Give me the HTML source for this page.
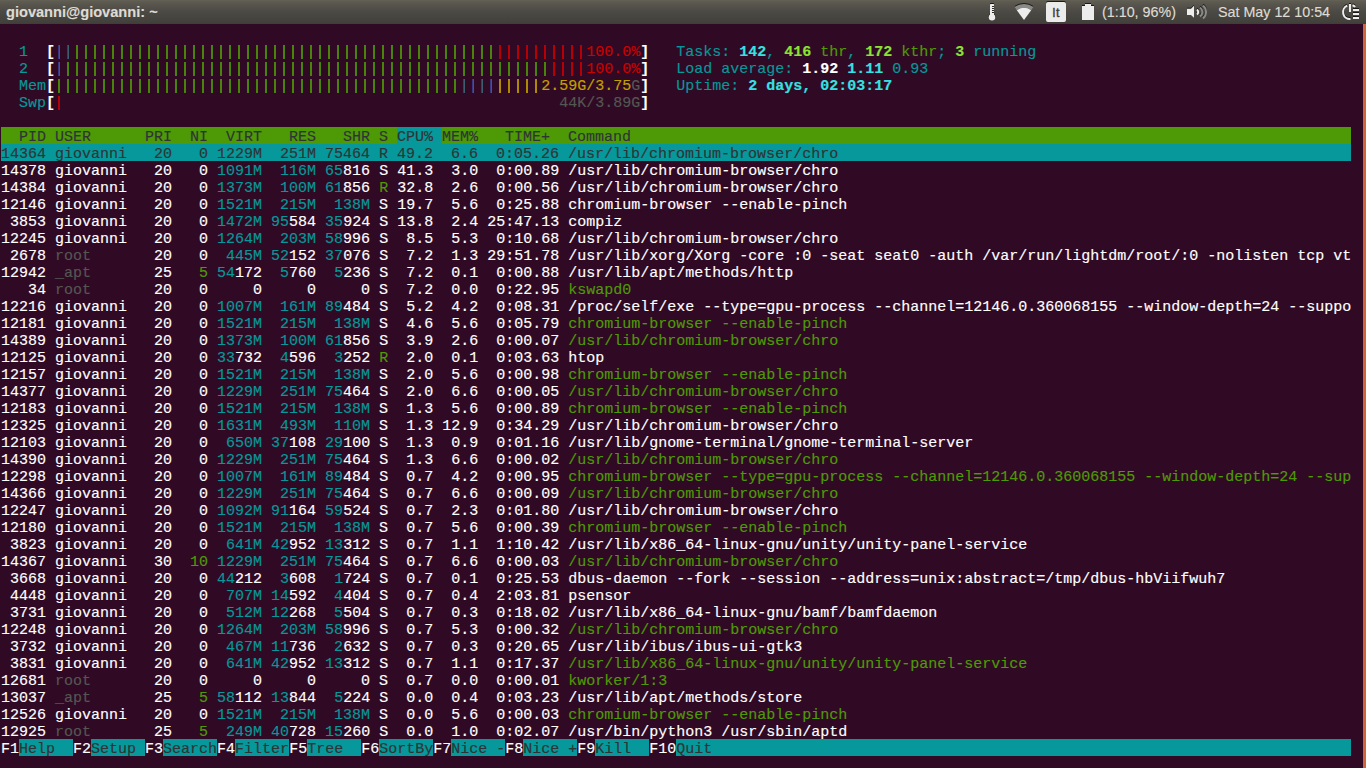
<!DOCTYPE html><html><head><meta charset="utf-8"><style>
*{margin:0;padding:0;box-sizing:border-box}
html,body{width:1366px;height:768px;overflow:hidden;background:#300a24}
body{position:relative;font-family:"Liberation Mono",monospace}
.p{position:absolute;left:0;top:0;width:1366px;height:24px;background:linear-gradient(#646156 0px,#5e5b53 1.5px,#57544d 5px,#4b4944 12px,#42413c 22px,#3e3d38 24px)}
.t{position:absolute;font-family:"Liberation Sans",sans-serif;color:#dfdbd2;white-space:pre;-webkit-text-stroke:0.15px #dfdbd2}
.r{position:absolute;left:1px;height:17px;line-height:17px;font-size:15px;white-space:pre;color:#fff;-webkit-text-stroke:0.15px currentColor}
.bg{position:absolute;height:17px}
.bar{position:absolute;width:2px;height:14px;opacity:0.85}
.w{color:#fff}.c{color:#06989a}.C{color:#34e2e2;font-weight:bold}.g{color:#4e9a06}.G{color:#8ae234;font-weight:bold}
.x{color:#555753}.rd{color:#cc0000}.y{color:#c4a000}.k{color:#2e3436}.b{color:#fff;font-weight:bold}
</style></head><body><div class="p"></div>
<div class="t" style="left:6px;top:4px;font-size:14.6px;font-weight:bold">giovanni@giovanni: ~</div>
<div class="t" style="left:1102px;top:4px;font-size:14.3px">(1:10, 96%)</div>
<div class="t" style="left:1218px;top:4px;font-size:14.3px">Sat May 12 10:54</div>
<svg style="position:absolute;left:0;top:0;filter:drop-shadow(0 -0.5px 0.6px rgba(0,0,0,0.7))" width="1366" height="24" viewBox="0 0 1366 24">
<g fill="#ededed">
 <!-- thermometer -->
 <rect x="990" y="4" width="4" height="12" rx="0.5"/>
 <circle cx="992" cy="17.3" r="3.2"/>
 <g fill="#2a2925"><rect x="992" y="6" width="2" height="1"/><rect x="992" y="8" width="2" height="1"/><rect x="992" y="10" width="2" height="1"/><rect x="992" y="12" width="2" height="1"/></g>
 <!-- wifi -->
 <path fill="#8a8a86" d="M1014.6,7.06 A16,16 0 0 1 1033.4,7.06 L1031.17,10.13 A12.2,12.2 0 0 0 1016.83,10.13 Z"/>
 <path d="M1024,20 L1016.83,10.13 A12.2,12.2 0 0 1 1031.17,10.13 Z"/>
 <!-- keyboard layout box -->
 <rect x="1046" y="2" width="20" height="20" rx="2" fill="#ebebeb"/>
 <!-- battery -->
 <rect x="1085" y="4" width="6" height="2"/>
 <rect x="1082" y="6" width="12" height="14"/>
 <!-- volume -->
 <path d="M1187,8.75 L1191,8.75 L1194,5.8 L1194,17.8 L1191,15 L1187,15 Z"/>
 <path fill="none" stroke="#ededed" stroke-width="2" d="M1197,9.5 A3.2,3.2 0 0 1 1197,14.5"/>
 <path fill="none" stroke="#8a8a86" stroke-width="2" d="M1200,7.5 A5.5,5.5 0 0 1 1200,16.5"/>
 <path fill="none" stroke="#8a8a86" stroke-width="2" d="M1203,5.5 A8.5,8.5 0 0 1 1203,18.5"/>
 <!-- power -->
 <rect x="1349" y="4" width="2" height="8"/>
 <path fill="none" stroke="#ededed" stroke-width="2" d="M1347.2,5.59 A7,7 0 0 0 1350.49,18.98"/>
 <path fill="none" stroke="#ededed" stroke-width="2" d="M1352.5,5.2 A7.2,7.2 0 0 1 1355.2,6.9"/>
 <rect x="1353" y="9" width="6" height="2"/>
 <rect x="1353" y="13" width="6" height="2"/>
 <rect x="1353" y="17" width="6" height="2"/>
</g>
</svg>
<div style="position:absolute;left:1046px;top:2px;width:20px;height:20px;font-family:Liberation Sans,sans-serif;font-weight:normal;-webkit-text-stroke:0.4px #3c3c3c;font-size:12.5px;line-height:22px;text-align:center;color:#3c3c3c;letter-spacing:0.8px;text-indent:0.8px">lt</div>
<div class="bar" style="top:45px;left:58px;background:linear-gradient(90deg,#3b3f92 50%,#3f6d7c 50%)"></div>
<div class="bar" style="top:45px;left:67px;background:linear-gradient(90deg,#3b3f92 50%,#3f6d7c 50%)"></div>
<div class="bar" style="top:45px;left:76px;background:#4e9a06"></div>
<div class="bar" style="top:45px;left:85px;background:#4e9a06"></div>
<div class="bar" style="top:45px;left:94px;background:#4e9a06"></div>
<div class="bar" style="top:45px;left:103px;background:#4e9a06"></div>
<div class="bar" style="top:45px;left:112px;background:#4e9a06"></div>
<div class="bar" style="top:45px;left:121px;background:#4e9a06"></div>
<div class="bar" style="top:45px;left:130px;background:#4e9a06"></div>
<div class="bar" style="top:45px;left:139px;background:#4e9a06"></div>
<div class="bar" style="top:45px;left:148px;background:#4e9a06"></div>
<div class="bar" style="top:45px;left:157px;background:#4e9a06"></div>
<div class="bar" style="top:45px;left:166px;background:#4e9a06"></div>
<div class="bar" style="top:45px;left:175px;background:#4e9a06"></div>
<div class="bar" style="top:45px;left:184px;background:#4e9a06"></div>
<div class="bar" style="top:45px;left:193px;background:#4e9a06"></div>
<div class="bar" style="top:45px;left:202px;background:#4e9a06"></div>
<div class="bar" style="top:45px;left:211px;background:#4e9a06"></div>
<div class="bar" style="top:45px;left:220px;background:#4e9a06"></div>
<div class="bar" style="top:45px;left:229px;background:#4e9a06"></div>
<div class="bar" style="top:45px;left:238px;background:#4e9a06"></div>
<div class="bar" style="top:45px;left:247px;background:#4e9a06"></div>
<div class="bar" style="top:45px;left:256px;background:#4e9a06"></div>
<div class="bar" style="top:45px;left:265px;background:#4e9a06"></div>
<div class="bar" style="top:45px;left:274px;background:#4e9a06"></div>
<div class="bar" style="top:45px;left:283px;background:#4e9a06"></div>
<div class="bar" style="top:45px;left:292px;background:#4e9a06"></div>
<div class="bar" style="top:45px;left:301px;background:#4e9a06"></div>
<div class="bar" style="top:45px;left:310px;background:#4e9a06"></div>
<div class="bar" style="top:45px;left:319px;background:#4e9a06"></div>
<div class="bar" style="top:45px;left:328px;background:#4e9a06"></div>
<div class="bar" style="top:45px;left:337px;background:#4e9a06"></div>
<div class="bar" style="top:45px;left:346px;background:#4e9a06"></div>
<div class="bar" style="top:45px;left:355px;background:#4e9a06"></div>
<div class="bar" style="top:45px;left:364px;background:#4e9a06"></div>
<div class="bar" style="top:45px;left:373px;background:#4e9a06"></div>
<div class="bar" style="top:45px;left:382px;background:#4e9a06"></div>
<div class="bar" style="top:45px;left:391px;background:#4e9a06"></div>
<div class="bar" style="top:45px;left:400px;background:#4e9a06"></div>
<div class="bar" style="top:45px;left:409px;background:#4e9a06"></div>
<div class="bar" style="top:45px;left:418px;background:#4e9a06"></div>
<div class="bar" style="top:45px;left:427px;background:#4e9a06"></div>
<div class="bar" style="top:45px;left:436px;background:#4e9a06"></div>
<div class="bar" style="top:45px;left:445px;background:#4e9a06"></div>
<div class="bar" style="top:45px;left:454px;background:#4e9a06"></div>
<div class="bar" style="top:45px;left:463px;background:#4e9a06"></div>
<div class="bar" style="top:45px;left:472px;background:#4e9a06"></div>
<div class="bar" style="top:45px;left:481px;background:#4e9a06"></div>
<div class="bar" style="top:45px;left:490px;background:#4e9a06"></div>
<div class="bar" style="top:45px;left:499px;background:#cc0000"></div>
<div class="bar" style="top:45px;left:508px;background:#cc0000"></div>
<div class="bar" style="top:45px;left:517px;background:#cc0000"></div>
<div class="bar" style="top:45px;left:526px;background:#cc0000"></div>
<div class="bar" style="top:45px;left:535px;background:#cc0000"></div>
<div class="bar" style="top:45px;left:544px;background:#cc0000"></div>
<div class="bar" style="top:45px;left:553px;background:#cc0000"></div>
<div class="bar" style="top:45px;left:562px;background:#cc0000"></div>
<div class="bar" style="top:45px;left:571px;background:#cc0000"></div>
<div class="bar" style="top:45px;left:580px;background:#cc0000"></div>
<div class="r" style="top:44px">  <span class="c">1</span>  <span class="b">[</span>                                                           <span class="rd">100.0%</span><span class="b">]</span>   <span class="c">Tasks: </span><span class="C">142</span><span class="c">, </span><span class="G">416</span><span class="g"> thr</span><span class="c">, </span><span class="G">172</span><span class="g"> kthr</span><span class="c">; </span><span class="G">3</span><span class="c"> running</span></div>
<div class="bar" style="top:62px;left:58px;background:linear-gradient(90deg,#3b3f92 50%,#3f6d7c 50%)"></div>
<div class="bar" style="top:62px;left:67px;background:#4e9a06"></div>
<div class="bar" style="top:62px;left:76px;background:#4e9a06"></div>
<div class="bar" style="top:62px;left:85px;background:#4e9a06"></div>
<div class="bar" style="top:62px;left:94px;background:#4e9a06"></div>
<div class="bar" style="top:62px;left:103px;background:#4e9a06"></div>
<div class="bar" style="top:62px;left:112px;background:#4e9a06"></div>
<div class="bar" style="top:62px;left:121px;background:#4e9a06"></div>
<div class="bar" style="top:62px;left:130px;background:#4e9a06"></div>
<div class="bar" style="top:62px;left:139px;background:#4e9a06"></div>
<div class="bar" style="top:62px;left:148px;background:#4e9a06"></div>
<div class="bar" style="top:62px;left:157px;background:#4e9a06"></div>
<div class="bar" style="top:62px;left:166px;background:#4e9a06"></div>
<div class="bar" style="top:62px;left:175px;background:#4e9a06"></div>
<div class="bar" style="top:62px;left:184px;background:#4e9a06"></div>
<div class="bar" style="top:62px;left:193px;background:#4e9a06"></div>
<div class="bar" style="top:62px;left:202px;background:#4e9a06"></div>
<div class="bar" style="top:62px;left:211px;background:#4e9a06"></div>
<div class="bar" style="top:62px;left:220px;background:#4e9a06"></div>
<div class="bar" style="top:62px;left:229px;background:#4e9a06"></div>
<div class="bar" style="top:62px;left:238px;background:#4e9a06"></div>
<div class="bar" style="top:62px;left:247px;background:#4e9a06"></div>
<div class="bar" style="top:62px;left:256px;background:#4e9a06"></div>
<div class="bar" style="top:62px;left:265px;background:#4e9a06"></div>
<div class="bar" style="top:62px;left:274px;background:#4e9a06"></div>
<div class="bar" style="top:62px;left:283px;background:#4e9a06"></div>
<div class="bar" style="top:62px;left:292px;background:#4e9a06"></div>
<div class="bar" style="top:62px;left:301px;background:#4e9a06"></div>
<div class="bar" style="top:62px;left:310px;background:#4e9a06"></div>
<div class="bar" style="top:62px;left:319px;background:#4e9a06"></div>
<div class="bar" style="top:62px;left:328px;background:#4e9a06"></div>
<div class="bar" style="top:62px;left:337px;background:#4e9a06"></div>
<div class="bar" style="top:62px;left:346px;background:#4e9a06"></div>
<div class="bar" style="top:62px;left:355px;background:#4e9a06"></div>
<div class="bar" style="top:62px;left:364px;background:#4e9a06"></div>
<div class="bar" style="top:62px;left:373px;background:#4e9a06"></div>
<div class="bar" style="top:62px;left:382px;background:#4e9a06"></div>
<div class="bar" style="top:62px;left:391px;background:#4e9a06"></div>
<div class="bar" style="top:62px;left:400px;background:#4e9a06"></div>
<div class="bar" style="top:62px;left:409px;background:#4e9a06"></div>
<div class="bar" style="top:62px;left:418px;background:#4e9a06"></div>
<div class="bar" style="top:62px;left:427px;background:#4e9a06"></div>
<div class="bar" style="top:62px;left:436px;background:#4e9a06"></div>
<div class="bar" style="top:62px;left:445px;background:#4e9a06"></div>
<div class="bar" style="top:62px;left:454px;background:#4e9a06"></div>
<div class="bar" style="top:62px;left:463px;background:#4e9a06"></div>
<div class="bar" style="top:62px;left:472px;background:#4e9a06"></div>
<div class="bar" style="top:62px;left:481px;background:#4e9a06"></div>
<div class="bar" style="top:62px;left:490px;background:#4e9a06"></div>
<div class="bar" style="top:62px;left:499px;background:#4e9a06"></div>
<div class="bar" style="top:62px;left:508px;background:#4e9a06"></div>
<div class="bar" style="top:62px;left:517px;background:#4e9a06"></div>
<div class="bar" style="top:62px;left:526px;background:#4e9a06"></div>
<div class="bar" style="top:62px;left:535px;background:#4e9a06"></div>
<div class="bar" style="top:62px;left:544px;background:#4e9a06"></div>
<div class="bar" style="top:62px;left:553px;background:#cc0000"></div>
<div class="bar" style="top:62px;left:562px;background:#cc0000"></div>
<div class="bar" style="top:62px;left:571px;background:#cc0000"></div>
<div class="bar" style="top:62px;left:580px;background:#cc0000"></div>
<div class="r" style="top:61px">  <span class="c">2</span>  <span class="b">[</span>                                                           <span class="rd">100.0%</span><span class="b">]</span>   <span class="c">Load average: </span><span class="b">1.92 </span><span class="C">1.11 </span><span class="c">0.93</span></div>
<div class="bar" style="top:79px;left:58px;background:#4e9a06"></div>
<div class="bar" style="top:79px;left:67px;background:#4e9a06"></div>
<div class="bar" style="top:79px;left:76px;background:#4e9a06"></div>
<div class="bar" style="top:79px;left:85px;background:#4e9a06"></div>
<div class="bar" style="top:79px;left:94px;background:#4e9a06"></div>
<div class="bar" style="top:79px;left:103px;background:#4e9a06"></div>
<div class="bar" style="top:79px;left:112px;background:#4e9a06"></div>
<div class="bar" style="top:79px;left:121px;background:#4e9a06"></div>
<div class="bar" style="top:79px;left:130px;background:#4e9a06"></div>
<div class="bar" style="top:79px;left:139px;background:#4e9a06"></div>
<div class="bar" style="top:79px;left:148px;background:#4e9a06"></div>
<div class="bar" style="top:79px;left:157px;background:#4e9a06"></div>
<div class="bar" style="top:79px;left:166px;background:#4e9a06"></div>
<div class="bar" style="top:79px;left:175px;background:#4e9a06"></div>
<div class="bar" style="top:79px;left:184px;background:#4e9a06"></div>
<div class="bar" style="top:79px;left:193px;background:#4e9a06"></div>
<div class="bar" style="top:79px;left:202px;background:#4e9a06"></div>
<div class="bar" style="top:79px;left:211px;background:#4e9a06"></div>
<div class="bar" style="top:79px;left:220px;background:#4e9a06"></div>
<div class="bar" style="top:79px;left:229px;background:#4e9a06"></div>
<div class="bar" style="top:79px;left:238px;background:#4e9a06"></div>
<div class="bar" style="top:79px;left:247px;background:#4e9a06"></div>
<div class="bar" style="top:79px;left:256px;background:#4e9a06"></div>
<div class="bar" style="top:79px;left:265px;background:#4e9a06"></div>
<div class="bar" style="top:79px;left:274px;background:#4e9a06"></div>
<div class="bar" style="top:79px;left:283px;background:#4e9a06"></div>
<div class="bar" style="top:79px;left:292px;background:#4e9a06"></div>
<div class="bar" style="top:79px;left:301px;background:#4e9a06"></div>
<div class="bar" style="top:79px;left:310px;background:#4e9a06"></div>
<div class="bar" style="top:79px;left:319px;background:#4e9a06"></div>
<div class="bar" style="top:79px;left:328px;background:#4e9a06"></div>
<div class="bar" style="top:79px;left:337px;background:#4e9a06"></div>
<div class="bar" style="top:79px;left:346px;background:#4e9a06"></div>
<div class="bar" style="top:79px;left:355px;background:#4e9a06"></div>
<div class="bar" style="top:79px;left:364px;background:#4e9a06"></div>
<div class="bar" style="top:79px;left:373px;background:#4e9a06"></div>
<div class="bar" style="top:79px;left:382px;background:#4e9a06"></div>
<div class="bar" style="top:79px;left:391px;background:#4e9a06"></div>
<div class="bar" style="top:79px;left:400px;background:#4e9a06"></div>
<div class="bar" style="top:79px;left:409px;background:#4e9a06"></div>
<div class="bar" style="top:79px;left:418px;background:#4e9a06"></div>
<div class="bar" style="top:79px;left:427px;background:#4e9a06"></div>
<div class="bar" style="top:79px;left:436px;background:#4e9a06"></div>
<div class="bar" style="top:79px;left:445px;background:#4e9a06"></div>
<div class="bar" style="top:79px;left:454px;background:#4e9a06"></div>
<div class="bar" style="top:79px;left:463px;background:linear-gradient(90deg,#3b3f92 50%,#3f6d7c 50%)"></div>
<div class="bar" style="top:79px;left:472px;background:linear-gradient(90deg,#3b3f92 50%,#3f6d7c 50%)"></div>
<div class="bar" style="top:79px;left:481px;background:linear-gradient(90deg,#3b3f92 50%,#3f6d7c 50%)"></div>
<div class="bar" style="top:79px;left:490px;background:linear-gradient(90deg,#3b3f92 50%,#3f6d7c 50%)"></div>
<div class="bar" style="top:79px;left:499px;background:#c4a000"></div>
<div class="bar" style="top:79px;left:508px;background:#c4a000"></div>
<div class="bar" style="top:79px;left:517px;background:#c4a000"></div>
<div class="bar" style="top:79px;left:526px;background:#c4a000"></div>
<div class="bar" style="top:79px;left:535px;background:#c4a000"></div>
<div class="r" style="top:78px">  <span class="c">Mem</span><span class="b">[</span>                                                      <span class="y">2.59G/3.75</span><span class="x">G</span><span class="b">]</span>   <span class="c">Uptime: </span><span class="C">2 days, 02:03:17</span></div>
<div class="bar" style="top:96px;left:58px;background:#cc0000"></div>
<div class="r" style="top:95px">  <span class="c">Swp</span><span class="b">[</span>                                                        <span class="x">44K/3.89G</span><span class="b">]</span></div>
<div class="bg" style="top:127px;left:1px;width:1350px;background:#4e9a06"></div>
<div class="bg" style="top:127px;left:397px;width:45px;background:#06989a"></div>
<div class="r" style="top:129px"><span class="k">  PID USER      PRI  NI  VIRT   RES   SHR S CPU% MEM%   TIME+  Command</span></div>
<div class="bg" style="top:144px;left:1px;width:1350px;background:#06989a"></div>
<div class="r" style="top:146px"><span class="k">14364 giovanni   20   0 1229M  251M 75464 R 49.2  6.6  0:05.26 /usr/lib/chromium-browser/chro</span></div>
<div class="r" style="top:163px"><span class="w">14378 </span><span class="w">giovanni  </span><span class="w"> 20 </span><span class="w">  0 </span><span class="c">1091M </span><span class="c"> 116M </span><span class="c">65</span><span class="w">816 </span><span class="w">S</span><span class="w"> 41.3  3.0  0:00.89 </span><span class="w">/usr/lib/chromium-browser/chro</span></div>
<div class="r" style="top:180px"><span class="w">14384 </span><span class="w">giovanni  </span><span class="w"> 20 </span><span class="w">  0 </span><span class="c">1373M </span><span class="c"> 100M </span><span class="c">61</span><span class="w">856 </span><span class="g">R</span><span class="w"> 32.8  2.6  0:00.56 </span><span class="w">/usr/lib/chromium-browser/chro</span></div>
<div class="r" style="top:197px"><span class="w">12146 </span><span class="w">giovanni  </span><span class="w"> 20 </span><span class="w">  0 </span><span class="c">1521M </span><span class="c"> 215M </span><span class="c"> 138M </span><span class="w">S</span><span class="w"> 19.7  5.6  0:25.88 </span><span class="w">chromium-browser --enable-pinch</span></div>
<div class="r" style="top:214px"><span class="w"> 3853 </span><span class="w">giovanni  </span><span class="w"> 20 </span><span class="w">  0 </span><span class="c">1472M </span><span class="c">95</span><span class="w">584 </span><span class="c">35</span><span class="w">924 </span><span class="w">S</span><span class="w"> 13.8  2.4 25:47.13 </span><span class="w">compiz</span></div>
<div class="r" style="top:231px"><span class="w">12245 </span><span class="w">giovanni  </span><span class="w"> 20 </span><span class="w">  0 </span><span class="c">1264M </span><span class="c"> 203M </span><span class="c">58</span><span class="w">996 </span><span class="w">S</span><span class="w">  8.5  5.3  0:10.68 </span><span class="w">/usr/lib/chromium-browser/chro</span></div>
<div class="r" style="top:248px"><span class="w"> 2678 </span><span class="x">root      </span><span class="w"> 20 </span><span class="w">  0 </span><span class="c"> 445M </span><span class="c">52</span><span class="w">152 </span><span class="c">37</span><span class="w">076 </span><span class="w">S</span><span class="w">  7.2  1.3 29:51.78 </span><span class="w">/usr/lib/xorg/Xorg -core :0 -seat seat0 -auth /var/run/lightdm/root/:0 -nolisten tcp vt</span></div>
<div class="r" style="top:265px"><span class="w">12942 </span><span class="x">_apt      </span><span class="w"> 25 </span><span class="g">  5 </span><span class="c">54</span><span class="w">172 </span><span class="c"> 5</span><span class="w">760 </span><span class="c"> 5</span><span class="w">236 </span><span class="w">S</span><span class="w">  7.2  0.1  0:00.88 </span><span class="w">/usr/lib/apt/methods/http</span></div>
<div class="r" style="top:282px"><span class="w">   34 </span><span class="x">root      </span><span class="w"> 20 </span><span class="w">  0 </span><span class="w">    0 </span><span class="w">    0 </span><span class="w">    0 </span><span class="w">S</span><span class="w">  7.2  0.0  0:22.95 </span><span class="g">kswapd0</span></div>
<div class="r" style="top:299px"><span class="w">12216 </span><span class="w">giovanni  </span><span class="w"> 20 </span><span class="w">  0 </span><span class="c">1007M </span><span class="c"> 161M </span><span class="c">89</span><span class="w">484 </span><span class="w">S</span><span class="w">  5.2  4.2  0:08.31 </span><span class="w">/proc/self/exe --type=gpu-process --channel=12146.0.360068155 --window-depth=24 --suppo</span></div>
<div class="r" style="top:316px"><span class="w">12181 </span><span class="w">giovanni  </span><span class="w"> 20 </span><span class="w">  0 </span><span class="c">1521M </span><span class="c"> 215M </span><span class="c"> 138M </span><span class="w">S</span><span class="w">  4.6  5.6  0:05.79 </span><span class="g">chromium-browser --enable-pinch</span></div>
<div class="r" style="top:333px"><span class="w">14389 </span><span class="w">giovanni  </span><span class="w"> 20 </span><span class="w">  0 </span><span class="c">1373M </span><span class="c"> 100M </span><span class="c">61</span><span class="w">856 </span><span class="w">S</span><span class="w">  3.9  2.6  0:00.07 </span><span class="g">/usr/lib/chromium-browser/chro</span></div>
<div class="r" style="top:350px"><span class="w">12125 </span><span class="w">giovanni  </span><span class="w"> 20 </span><span class="w">  0 </span><span class="c">33</span><span class="w">732 </span><span class="c"> 4</span><span class="w">596 </span><span class="c"> 3</span><span class="w">252 </span><span class="g">R</span><span class="w">  2.0  0.1  0:03.63 </span><span class="w">htop</span></div>
<div class="r" style="top:367px"><span class="w">12157 </span><span class="w">giovanni  </span><span class="w"> 20 </span><span class="w">  0 </span><span class="c">1521M </span><span class="c"> 215M </span><span class="c"> 138M </span><span class="w">S</span><span class="w">  2.0  5.6  0:00.98 </span><span class="g">chromium-browser --enable-pinch</span></div>
<div class="r" style="top:384px"><span class="w">14377 </span><span class="w">giovanni  </span><span class="w"> 20 </span><span class="w">  0 </span><span class="c">1229M </span><span class="c"> 251M </span><span class="c">75</span><span class="w">464 </span><span class="w">S</span><span class="w">  2.0  6.6  0:00.05 </span><span class="g">/usr/lib/chromium-browser/chro</span></div>
<div class="r" style="top:401px"><span class="w">12183 </span><span class="w">giovanni  </span><span class="w"> 20 </span><span class="w">  0 </span><span class="c">1521M </span><span class="c"> 215M </span><span class="c"> 138M </span><span class="w">S</span><span class="w">  1.3  5.6  0:00.89 </span><span class="g">chromium-browser --enable-pinch</span></div>
<div class="r" style="top:418px"><span class="w">12325 </span><span class="w">giovanni  </span><span class="w"> 20 </span><span class="w">  0 </span><span class="c">1631M </span><span class="c"> 493M </span><span class="c"> 110M </span><span class="w">S</span><span class="w">  1.3 12.9  0:34.29 </span><span class="w">/usr/lib/chromium-browser/chro</span></div>
<div class="r" style="top:435px"><span class="w">12103 </span><span class="w">giovanni  </span><span class="w"> 20 </span><span class="w">  0 </span><span class="c"> 650M </span><span class="c">37</span><span class="w">108 </span><span class="c">29</span><span class="w">100 </span><span class="w">S</span><span class="w">  1.3  0.9  0:01.16 </span><span class="w">/usr/lib/gnome-terminal/gnome-terminal-server</span></div>
<div class="r" style="top:452px"><span class="w">14390 </span><span class="w">giovanni  </span><span class="w"> 20 </span><span class="w">  0 </span><span class="c">1229M </span><span class="c"> 251M </span><span class="c">75</span><span class="w">464 </span><span class="w">S</span><span class="w">  1.3  6.6  0:00.02 </span><span class="g">/usr/lib/chromium-browser/chro</span></div>
<div class="r" style="top:469px"><span class="w">12298 </span><span class="w">giovanni  </span><span class="w"> 20 </span><span class="w">  0 </span><span class="c">1007M </span><span class="c"> 161M </span><span class="c">89</span><span class="w">484 </span><span class="w">S</span><span class="w">  0.7  4.2  0:00.95 </span><span class="g">chromium-browser --type=gpu-process --channel=12146.0.360068155 --window-depth=24 --sup</span></div>
<div class="r" style="top:486px"><span class="w">14366 </span><span class="w">giovanni  </span><span class="w"> 20 </span><span class="w">  0 </span><span class="c">1229M </span><span class="c"> 251M </span><span class="c">75</span><span class="w">464 </span><span class="w">S</span><span class="w">  0.7  6.6  0:00.09 </span><span class="g">/usr/lib/chromium-browser/chro</span></div>
<div class="r" style="top:503px"><span class="w">12247 </span><span class="w">giovanni  </span><span class="w"> 20 </span><span class="w">  0 </span><span class="c">1092M </span><span class="c">91</span><span class="w">164 </span><span class="c">59</span><span class="w">524 </span><span class="w">S</span><span class="w">  0.7  2.3  0:01.80 </span><span class="w">/usr/lib/chromium-browser/chro</span></div>
<div class="r" style="top:520px"><span class="w">12180 </span><span class="w">giovanni  </span><span class="w"> 20 </span><span class="w">  0 </span><span class="c">1521M </span><span class="c"> 215M </span><span class="c"> 138M </span><span class="w">S</span><span class="w">  0.7  5.6  0:00.39 </span><span class="g">chromium-browser --enable-pinch</span></div>
<div class="r" style="top:537px"><span class="w"> 3823 </span><span class="w">giovanni  </span><span class="w"> 20 </span><span class="w">  0 </span><span class="c"> 641M </span><span class="c">42</span><span class="w">952 </span><span class="c">13</span><span class="w">312 </span><span class="w">S</span><span class="w">  0.7  1.1  1:10.42 </span><span class="w">/usr/lib/x86_64-linux-gnu/unity/unity-panel-service</span></div>
<div class="r" style="top:554px"><span class="w">14367 </span><span class="w">giovanni  </span><span class="w"> 30 </span><span class="g"> 10 </span><span class="c">1229M </span><span class="c"> 251M </span><span class="c">75</span><span class="w">464 </span><span class="w">S</span><span class="w">  0.7  6.6  0:00.03 </span><span class="g">/usr/lib/chromium-browser/chro</span></div>
<div class="r" style="top:571px"><span class="w"> 3668 </span><span class="w">giovanni  </span><span class="w"> 20 </span><span class="w">  0 </span><span class="c">44</span><span class="w">212 </span><span class="c"> 3</span><span class="w">608 </span><span class="c"> 1</span><span class="w">724 </span><span class="w">S</span><span class="w">  0.7  0.1  0:25.53 </span><span class="w">dbus-daemon --fork --session --address=unix:abstract=/tmp/dbus-hbViifwuh7</span></div>
<div class="r" style="top:588px"><span class="w"> 4448 </span><span class="w">giovanni  </span><span class="w"> 20 </span><span class="w">  0 </span><span class="c"> 707M </span><span class="c">14</span><span class="w">592 </span><span class="c"> 4</span><span class="w">404 </span><span class="w">S</span><span class="w">  0.7  0.4  2:03.81 </span><span class="w">psensor</span></div>
<div class="r" style="top:605px"><span class="w"> 3731 </span><span class="w">giovanni  </span><span class="w"> 20 </span><span class="w">  0 </span><span class="c"> 512M </span><span class="c">12</span><span class="w">268 </span><span class="c"> 5</span><span class="w">504 </span><span class="w">S</span><span class="w">  0.7  0.3  0:18.02 </span><span class="w">/usr/lib/x86_64-linux-gnu/bamf/bamfdaemon</span></div>
<div class="r" style="top:622px"><span class="w">12248 </span><span class="w">giovanni  </span><span class="w"> 20 </span><span class="w">  0 </span><span class="c">1264M </span><span class="c"> 203M </span><span class="c">58</span><span class="w">996 </span><span class="w">S</span><span class="w">  0.7  5.3  0:00.32 </span><span class="g">/usr/lib/chromium-browser/chro</span></div>
<div class="r" style="top:639px"><span class="w"> 3732 </span><span class="w">giovanni  </span><span class="w"> 20 </span><span class="w">  0 </span><span class="c"> 467M </span><span class="c">11</span><span class="w">736 </span><span class="c"> 2</span><span class="w">632 </span><span class="w">S</span><span class="w">  0.7  0.3  0:20.65 </span><span class="w">/usr/lib/ibus/ibus-ui-gtk3</span></div>
<div class="r" style="top:656px"><span class="w"> 3831 </span><span class="w">giovanni  </span><span class="w"> 20 </span><span class="w">  0 </span><span class="c"> 641M </span><span class="c">42</span><span class="w">952 </span><span class="c">13</span><span class="w">312 </span><span class="w">S</span><span class="w">  0.7  1.1  0:17.37 </span><span class="g">/usr/lib/x86_64-linux-gnu/unity/unity-panel-service</span></div>
<div class="r" style="top:673px"><span class="w">12681 </span><span class="x">root      </span><span class="w"> 20 </span><span class="w">  0 </span><span class="w">    0 </span><span class="w">    0 </span><span class="w">    0 </span><span class="w">S</span><span class="w">  0.7  0.0  0:00.01 </span><span class="g">kworker/1:3</span></div>
<div class="r" style="top:690px"><span class="w">13037 </span><span class="x">_apt      </span><span class="w"> 25 </span><span class="g">  5 </span><span class="c">58</span><span class="w">112 </span><span class="c">13</span><span class="w">844 </span><span class="c"> 5</span><span class="w">224 </span><span class="w">S</span><span class="w">  0.0  0.4  0:03.23 </span><span class="w">/usr/lib/apt/methods/store</span></div>
<div class="r" style="top:707px"><span class="w">12526 </span><span class="w">giovanni  </span><span class="w"> 20 </span><span class="w">  0 </span><span class="c">1521M </span><span class="c"> 215M </span><span class="c"> 138M </span><span class="w">S</span><span class="w">  0.0  5.6  0:00.03 </span><span class="g">chromium-browser --enable-pinch</span></div>
<div class="r" style="top:724px"><span class="w">12925 </span><span class="x">root      </span><span class="w"> 25 </span><span class="g">  5 </span><span class="c"> 249M </span><span class="c">40</span><span class="w">728 </span><span class="c">15</span><span class="w">260 </span><span class="w">S</span><span class="w">  0.0  1.0  0:02.07 </span><span class="w">/usr/bin/python3 /usr/sbin/aptd</span></div>
<div class="bg" style="top:739px;left:19px;width:54px;background:#06989a"></div>
<div class="bg" style="top:739px;left:91px;width:54px;background:#06989a"></div>
<div class="bg" style="top:739px;left:163px;width:54px;background:#06989a"></div>
<div class="bg" style="top:739px;left:235px;width:54px;background:#06989a"></div>
<div class="bg" style="top:739px;left:307px;width:54px;background:#06989a"></div>
<div class="bg" style="top:739px;left:379px;width:54px;background:#06989a"></div>
<div class="bg" style="top:739px;left:451px;width:54px;background:#06989a"></div>
<div class="bg" style="top:739px;left:523px;width:54px;background:#06989a"></div>
<div class="bg" style="top:739px;left:595px;width:54px;background:#06989a"></div>
<div class="bg" style="top:739px;left:676px;width:675px;background:#06989a"></div>
<div class="r" style="top:741px"><span class="w">F1</span><span class="k">Help  </span><span class="w">F2</span><span class="k">Setup </span><span class="w">F3</span><span class="k">Search</span><span class="w">F4</span><span class="k">Filter</span><span class="w">F5</span><span class="k">Tree  </span><span class="w">F6</span><span class="k">SortBy</span><span class="w">F7</span><span class="k">Nice -</span><span class="w">F8</span><span class="k">Nice +</span><span class="w">F9</span><span class="k">Kill  </span><span class="w">F10</span><span class="k">Quit  </span></div>
<div style="position:absolute;left:1363px;top:24px;width:3px;height:744px;background:#d0643a"></div></body></html>
